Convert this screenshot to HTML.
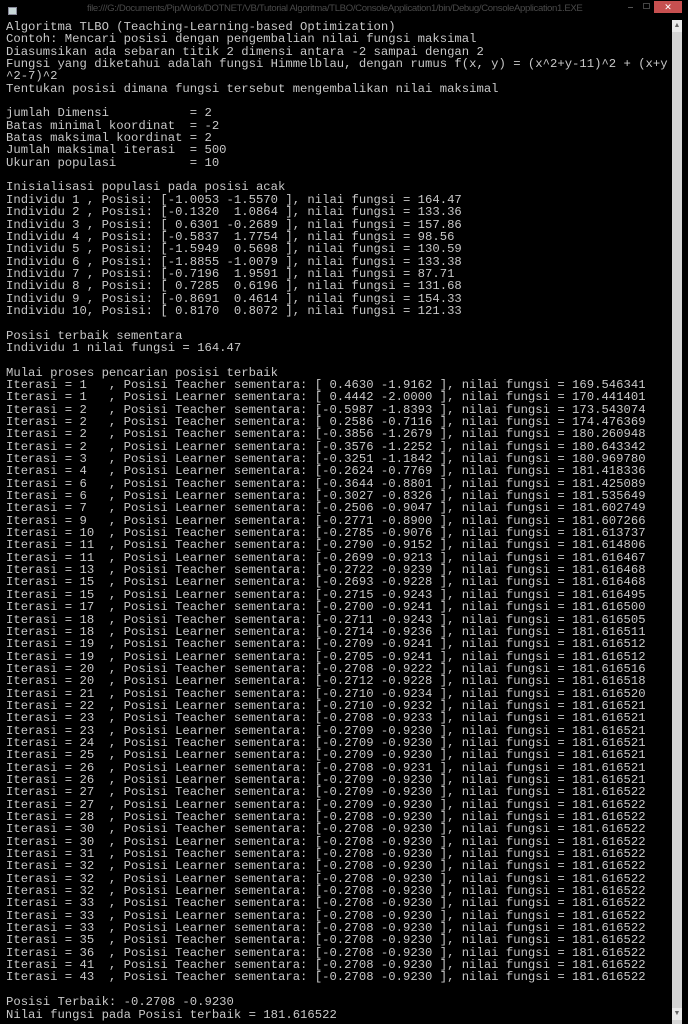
<!DOCTYPE html>
<html><head><meta charset="utf-8"><style>
html,body{margin:0;padding:0;background:#000;width:688px;height:1024px;overflow:hidden}
.title{position:absolute;left:0;top:0;width:688px;height:19px;background:#000}
.ttext{position:absolute;left:87px;top:3px;font:9.6px "Liberation Sans",sans-serif;color:#4a4a4a;white-space:nowrap;letter-spacing:-0.35px}
.icon{position:absolute;left:8px;top:7px;width:7px;height:6px;background:#c8d8d8;border:1px solid #889}
.close{position:absolute;left:654px;top:1px;width:28px;height:12px;background:#c75050;color:#fff;font:9px "Liberation Sans",sans-serif;text-align:center;line-height:12px}
.min{position:absolute;left:628px;top:7px;width:5px;height:1px;background:#555}
.max{position:absolute;left:643px;top:3px;width:5px;height:4px;border:1px solid #444}
.sb{position:absolute;left:672px;top:20px;width:10px;height:1004px;background:#d4d4d4}
.ar{position:absolute;left:672px;width:10px;height:12px;background:#eaeaea;color:#666;font:7px "Liberation Sans",sans-serif;text-align:center;line-height:12px}
pre{position:absolute;left:6px;top:21px;margin:0;font-family:"Liberation Mono",monospace;font-size:12.25px;line-height:12.34px;color:#c8c8c8}
</style></head><body>
<div class="title"><div class="icon"></div><div class="ttext">file:///G:/Documents/Pip/Work/DOTNET/VB/Tutorial Algoritma/TLBO/ConsoleApplication1/bin/Debug/ConsoleApplication1.EXE</div><div class="min"></div><div class="max"></div><div class="close">✕</div></div>
<div class="sb"></div><div class="ar" style="top:20px">▲</div><div class="ar" style="top:1008px">▼</div>
<pre>Algoritma TLBO (Teaching-Learning-based Optimization)
Contoh: Mencari posisi dengan pengembalian nilai fungsi maksimal
Diasumsikan ada sebaran titik 2 dimensi antara -2 sampai dengan 2
Fungsi yang diketahui adalah fungsi Himmelblau, dengan rumus f(x, y) = (x^2+y-11)^2 + (x+y
^2-7)^2
Tentukan posisi dimana fungsi tersebut mengembalikan nilai maksimal

jumlah Dimensi           = 2
Batas minimal koordinat  = -2
Batas maksimal koordinat = 2
Jumlah maksimal iterasi  = 500
Ukuran populasi          = 10

Inisialisasi populasi pada posisi acak
Individu 1 , Posisi: [-1.0053 -1.5570 ], nilai fungsi = 164.47
Individu 2 , Posisi: [-0.1320  1.0864 ], nilai fungsi = 133.36
Individu 3 , Posisi: [ 0.6301 -0.2689 ], nilai fungsi = 157.86
Individu 4 , Posisi: [-0.5837  1.7754 ], nilai fungsi = 98.56
Individu 5 , Posisi: [-1.5949  0.5698 ], nilai fungsi = 130.59
Individu 6 , Posisi: [-1.8855 -1.0079 ], nilai fungsi = 133.38
Individu 7 , Posisi: [-0.7196  1.9591 ], nilai fungsi = 87.71
Individu 8 , Posisi: [ 0.7285  0.6196 ], nilai fungsi = 131.68
Individu 9 , Posisi: [-0.8691  0.4614 ], nilai fungsi = 154.33
Individu 10, Posisi: [ 0.8170  0.8072 ], nilai fungsi = 121.33

Posisi terbaik sementara
Individu 1 nilai fungsi = 164.47

Mulai proses pencarian posisi terbaik
Iterasi = 1   , Posisi Teacher sementara: [ 0.4630 -1.9162 ], nilai fungsi = 169.546341
Iterasi = 1   , Posisi Learner sementara: [ 0.4442 -2.0000 ], nilai fungsi = 170.441401
Iterasi = 2   , Posisi Teacher sementara: [-0.5987 -1.8393 ], nilai fungsi = 173.543074
Iterasi = 2   , Posisi Teacher sementara: [ 0.2586 -0.7116 ], nilai fungsi = 174.476369
Iterasi = 2   , Posisi Teacher sementara: [-0.3856 -1.2679 ], nilai fungsi = 180.260948
Iterasi = 2   , Posisi Learner sementara: [-0.3576 -1.2252 ], nilai fungsi = 180.643342
Iterasi = 3   , Posisi Learner sementara: [-0.3251 -1.1842 ], nilai fungsi = 180.969780
Iterasi = 4   , Posisi Learner sementara: [-0.2624 -0.7769 ], nilai fungsi = 181.418336
Iterasi = 6   , Posisi Teacher sementara: [-0.3644 -0.8801 ], nilai fungsi = 181.425089
Iterasi = 6   , Posisi Learner sementara: [-0.3027 -0.8326 ], nilai fungsi = 181.535649
Iterasi = 7   , Posisi Learner sementara: [-0.2506 -0.9047 ], nilai fungsi = 181.602749
Iterasi = 9   , Posisi Learner sementara: [-0.2771 -0.8900 ], nilai fungsi = 181.607266
Iterasi = 10  , Posisi Teacher sementara: [-0.2785 -0.9076 ], nilai fungsi = 181.613737
Iterasi = 11  , Posisi Teacher sementara: [-0.2790 -0.9152 ], nilai fungsi = 181.614806
Iterasi = 11  , Posisi Learner sementara: [-0.2699 -0.9213 ], nilai fungsi = 181.616467
Iterasi = 13  , Posisi Teacher sementara: [-0.2722 -0.9239 ], nilai fungsi = 181.616468
Iterasi = 15  , Posisi Learner sementara: [-0.2693 -0.9228 ], nilai fungsi = 181.616468
Iterasi = 15  , Posisi Learner sementara: [-0.2715 -0.9243 ], nilai fungsi = 181.616495
Iterasi = 17  , Posisi Teacher sementara: [-0.2700 -0.9241 ], nilai fungsi = 181.616500
Iterasi = 18  , Posisi Teacher sementara: [-0.2711 -0.9243 ], nilai fungsi = 181.616505
Iterasi = 18  , Posisi Learner sementara: [-0.2714 -0.9236 ], nilai fungsi = 181.616511
Iterasi = 19  , Posisi Teacher sementara: [-0.2709 -0.9241 ], nilai fungsi = 181.616512
Iterasi = 19  , Posisi Learner sementara: [-0.2705 -0.9241 ], nilai fungsi = 181.616512
Iterasi = 20  , Posisi Teacher sementara: [-0.2708 -0.9222 ], nilai fungsi = 181.616516
Iterasi = 20  , Posisi Learner sementara: [-0.2712 -0.9228 ], nilai fungsi = 181.616518
Iterasi = 21  , Posisi Teacher sementara: [-0.2710 -0.9234 ], nilai fungsi = 181.616520
Iterasi = 22  , Posisi Learner sementara: [-0.2710 -0.9232 ], nilai fungsi = 181.616521
Iterasi = 23  , Posisi Teacher sementara: [-0.2708 -0.9233 ], nilai fungsi = 181.616521
Iterasi = 23  , Posisi Learner sementara: [-0.2709 -0.9230 ], nilai fungsi = 181.616521
Iterasi = 24  , Posisi Teacher sementara: [-0.2709 -0.9230 ], nilai fungsi = 181.616521
Iterasi = 25  , Posisi Learner sementara: [-0.2709 -0.9230 ], nilai fungsi = 181.616521
Iterasi = 26  , Posisi Learner sementara: [-0.2708 -0.9231 ], nilai fungsi = 181.616521
Iterasi = 26  , Posisi Learner sementara: [-0.2709 -0.9230 ], nilai fungsi = 181.616521
Iterasi = 27  , Posisi Teacher sementara: [-0.2709 -0.9230 ], nilai fungsi = 181.616522
Iterasi = 27  , Posisi Learner sementara: [-0.2709 -0.9230 ], nilai fungsi = 181.616522
Iterasi = 28  , Posisi Teacher sementara: [-0.2708 -0.9230 ], nilai fungsi = 181.616522
Iterasi = 30  , Posisi Teacher sementara: [-0.2708 -0.9230 ], nilai fungsi = 181.616522
Iterasi = 30  , Posisi Learner sementara: [-0.2708 -0.9230 ], nilai fungsi = 181.616522
Iterasi = 31  , Posisi Teacher sementara: [-0.2708 -0.9230 ], nilai fungsi = 181.616522
Iterasi = 32  , Posisi Learner sementara: [-0.2708 -0.9230 ], nilai fungsi = 181.616522
Iterasi = 32  , Posisi Learner sementara: [-0.2708 -0.9230 ], nilai fungsi = 181.616522
Iterasi = 32  , Posisi Learner sementara: [-0.2708 -0.9230 ], nilai fungsi = 181.616522
Iterasi = 33  , Posisi Teacher sementara: [-0.2708 -0.9230 ], nilai fungsi = 181.616522
Iterasi = 33  , Posisi Learner sementara: [-0.2708 -0.9230 ], nilai fungsi = 181.616522
Iterasi = 33  , Posisi Learner sementara: [-0.2708 -0.9230 ], nilai fungsi = 181.616522
Iterasi = 35  , Posisi Teacher sementara: [-0.2708 -0.9230 ], nilai fungsi = 181.616522
Iterasi = 36  , Posisi Teacher sementara: [-0.2708 -0.9230 ], nilai fungsi = 181.616522
Iterasi = 41  , Posisi Teacher sementara: [-0.2708 -0.9230 ], nilai fungsi = 181.616522
Iterasi = 43  , Posisi Teacher sementara: [-0.2708 -0.9230 ], nilai fungsi = 181.616522

Posisi Terbaik: -0.2708 -0.9230
Nilai fungsi pada Posisi terbaik = 181.616522</pre>
</body></html>
